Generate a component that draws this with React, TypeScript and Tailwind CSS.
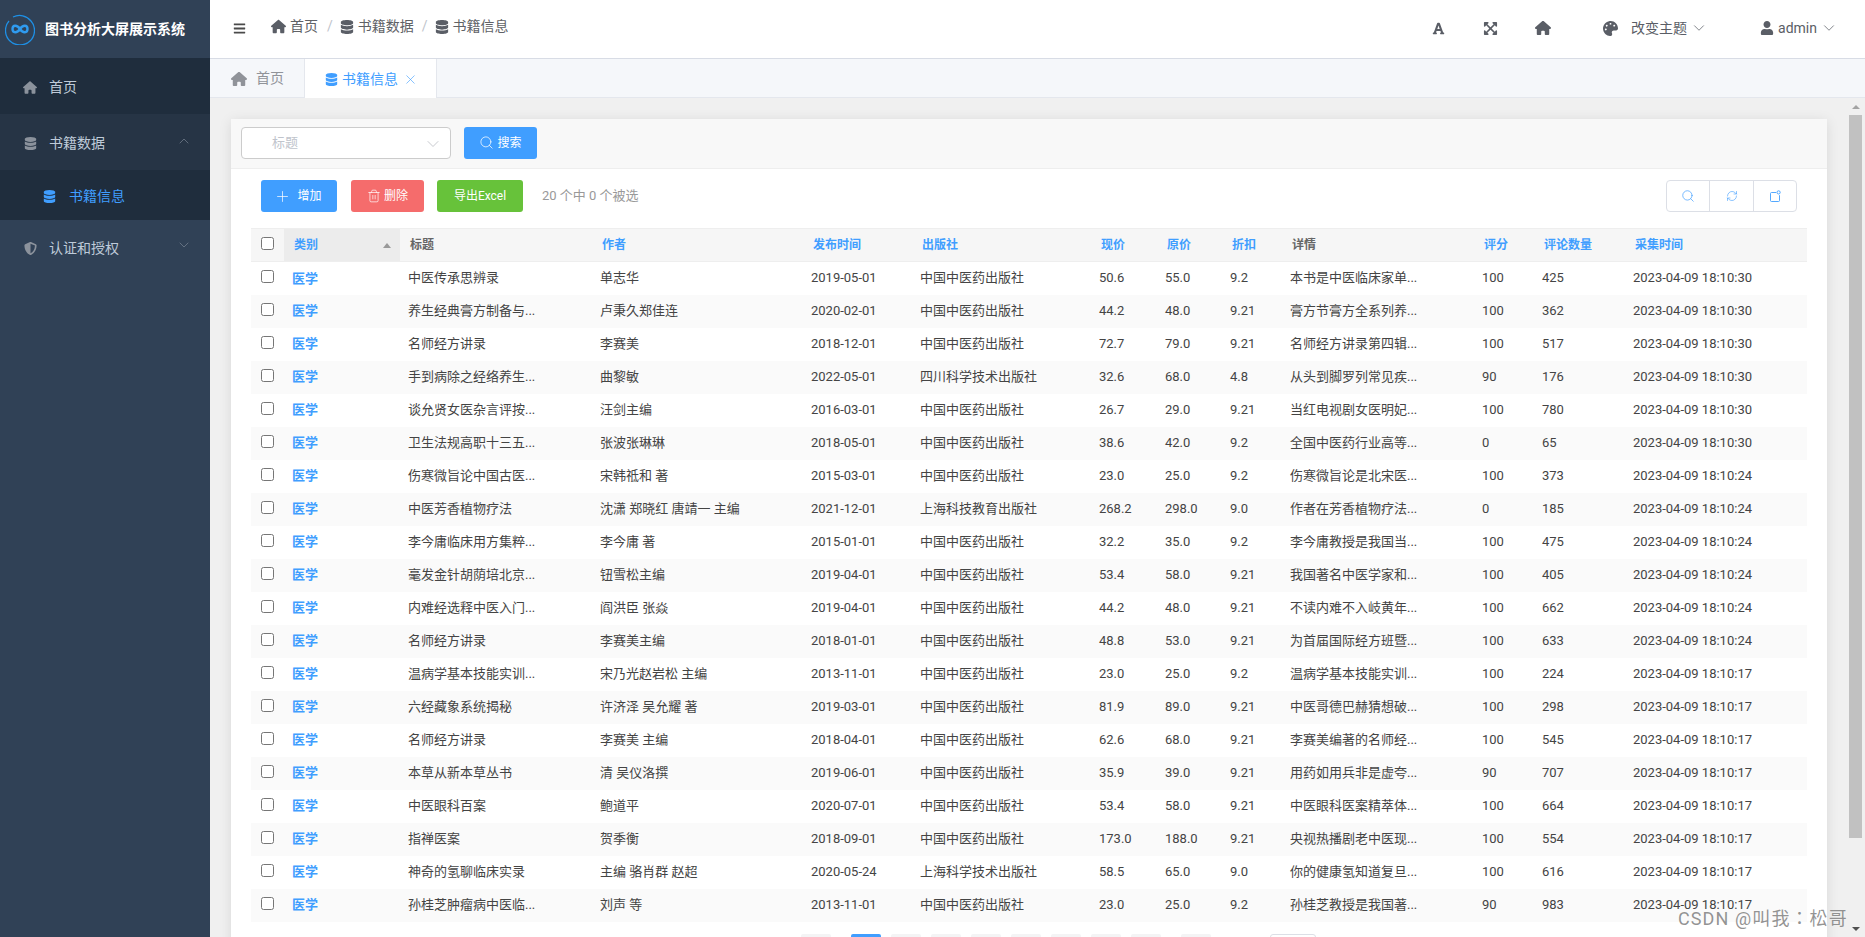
import React from "react";
import { FaDatabase, FaFont, FaExpandArrowsAlt, FaPalette, FaUser, FaShieldAlt, FaBars } from "react-icons/fa";
import { FaHouse as FaHome } from "react-icons/fa6";
import { ChevronDown, ChevronUp, Search, Plus, Trash2, RefreshCw, X } from "lucide-react";

const FONT = { fontFamily: "Roboto, 'Noto Sans CJK SC', sans-serif" };

const COLS = [
  { key: "category", title: "类别", width: 116, blue: true },
  { key: "title", title: "标题", width: 192, blue: false },
  { key: "author", title: "作者", width: 211, blue: true },
  { key: "date", title: "发布时间", width: 109, blue: true },
  { key: "press", title: "出版社", width: 179, blue: true },
  { key: "price", title: "现价", width: 66, blue: true },
  { key: "orig", title: "原价", width: 65, blue: true },
  { key: "disc", title: "折扣", width: 60, blue: true },
  { key: "detail", title: "详情", width: 192, blue: false },
  { key: "score", title: "评分", width: 60, blue: true },
  { key: "comments", title: "评论数量", width: 91, blue: true },
  { key: "time", title: "采集时间", width: 182, blue: true },
];

const ZY = "中国中医药出版社";
const ROWS = [
  ["中医传承思辨录", "单志华", "2019-05-01", ZY, "50.6", "55.0", "9.2", "本书是中医临床家单...", "100", "425", "2023-04-09 18:10:30"],
  ["养生经典膏方制备与...", "卢秉久郑佳连", "2020-02-01", ZY, "44.2", "48.0", "9.21", "膏方节膏方全系列养...", "100", "362", "2023-04-09 18:10:30"],
  ["名师经方讲录", "李赛美", "2018-12-01", ZY, "72.7", "79.0", "9.21", "名师经方讲录第四辑...", "100", "517", "2023-04-09 18:10:30"],
  ["手到病除之经络养生...", "曲黎敏", "2022-05-01", "四川科学技术出版社", "32.6", "68.0", "4.8", "从头到脚罗列常见疾...", "90", "176", "2023-04-09 18:10:30"],
  ["谈允贤女医杂言评按...", "汪剑主编", "2016-03-01", ZY, "26.7", "29.0", "9.21", "当红电视剧女医明妃...", "100", "780", "2023-04-09 18:10:30"],
  ["卫生法规高职十三五...", "张波张琳琳", "2018-05-01", ZY, "38.6", "42.0", "9.2", "全国中医药行业高等...", "0", "65", "2023-04-09 18:10:30"],
  ["伤寒微旨论中国古医...", "宋韩祗和 著", "2015-03-01", ZY, "23.0", "25.0", "9.2", "伤寒微旨论是北宋医...", "100", "373", "2023-04-09 18:10:24"],
  ["中医芳香植物疗法", "沈潇 郑晓红 唐靖一 主编", "2021-12-01", "上海科技教育出版社", "268.2", "298.0", "9.0", "作者在芳香植物疗法...", "0", "185", "2023-04-09 18:10:24"],
  ["李今庸临床用方集粹...", "李今庸 著", "2015-01-01", ZY, "32.2", "35.0", "9.2", "李今庸教授是我国当...", "100", "475", "2023-04-09 18:10:24"],
  ["毫发金针胡荫培北京...", "钮雪松主编", "2019-04-01", ZY, "53.4", "58.0", "9.21", "我国著名中医学家和...", "100", "405", "2023-04-09 18:10:24"],
  ["内难经选释中医入门...", "阎洪臣 张焱", "2019-04-01", ZY, "44.2", "48.0", "9.21", "不读内难不入岐黄年...", "100", "662", "2023-04-09 18:10:24"],
  ["名师经方讲录", "李赛美主编", "2018-01-01", ZY, "48.8", "53.0", "9.21", "为首届国际经方班暨...", "100", "633", "2023-04-09 18:10:24"],
  ["温病学基本技能实训...", "宋乃光赵岩松 主编", "2013-11-01", ZY, "23.0", "25.0", "9.2", "温病学基本技能实训...", "100", "224", "2023-04-09 18:10:17"],
  ["六经藏象系统揭秘", "许济泽 吴允耀 著", "2019-03-01", ZY, "81.9", "89.0", "9.21", "中医哥德巴赫猜想破...", "100", "298", "2023-04-09 18:10:17"],
  ["名师经方讲录", "李赛美 主编", "2018-04-01", ZY, "62.6", "68.0", "9.21", "李赛美编著的名师经...", "100", "545", "2023-04-09 18:10:17"],
  ["本草从新本草丛书", "清 吴仪洛撰", "2019-06-01", ZY, "35.9", "39.0", "9.21", "用药如用兵非是虚夸...", "90", "707", "2023-04-09 18:10:17"],
  ["中医眼科百案", "鲍道平", "2020-07-01", ZY, "53.4", "58.0", "9.21", "中医眼科医案精萃体...", "100", "664", "2023-04-09 18:10:17"],
  ["指禅医案", "贺季衡", "2018-09-01", ZY, "173.0", "188.0", "9.21", "央视热播剧老中医现...", "100", "554", "2023-04-09 18:10:17"],
  ["神奇的氢聊临床实录", "主编 骆肖群 赵超", "2020-05-24", "上海科学技术出版社", "58.5", "65.0", "9.0", "你的健康氢知道复旦...", "100", "616", "2023-04-09 18:10:17"],
  ["孙桂芝肿瘤病中医临...", "刘声 等", "2013-11-01", ZY, "23.0", "25.0", "9.2", "孙桂芝教授是我国著...", "90", "983", "2023-04-09 18:10:17"],
];

// 菜单行
const MenuRow = ({ icon, label, chevron, className }: { icon: React.ReactNode; label: string; chevron?: "up" | "down"; className: string }) => (
  <div className={`flex items-center ${className}`}>
    <span className="flex w-[14px] justify-center text-[#8b929c]">{icon}</span>
    <span className="ml-[12px] text-[14px] text-[#bfcbd9]">{label}</span>
    {chevron === "up" && <ChevronUp className="ml-auto mr-[18px] mb-[4px] text-[#7f8a98]" size={16} strokeWidth={1} />}
    {chevron === "down" && <ChevronDown className="ml-auto mr-[18px] mb-[6px] text-[#7f8a98]" size={16} strokeWidth={1} />}
  </div>
);

const Sidebar = () => (
  <aside className="flex w-[210px] shrink-0 flex-col bg-[#304156]">
    <div className="flex h-[58px] items-center pl-[5px]">
      <svg width="30" height="32" viewBox="0 0 30 32" fill="none">
        <path d="M4 8 A14.5 14.5 0 1 0 26 8 A14.5 14.5 0 0 0 8 4" stroke="#1e90e6" strokeWidth="1.3" />
        <path d="M15 16 C12 11.5 7.5 12 7.5 16 C7.5 20 12 20.5 15 16 C18 11.5 22.5 12 22.5 16 C22.5 20 18 20.5 15 16 Z" stroke="#2f9bf0" strokeWidth="2.4" />
      </svg>
      <span className="ml-[10px] text-[14px] font-bold text-white">图书分析大屏展示系统</span>
    </div>
    <MenuRow className="h-[56px] bg-[#1f2d3d] pl-[23px] pt-[2px]" icon={<FaHome size={15} />} label="首页" />
    <MenuRow className="h-[56px] bg-[#263445] pl-[23px] pt-[2px]" icon={<FaDatabase size={13} />} label="书籍数据" chevron="up" />
    <div className="flex h-[50px] items-center bg-[#1f2d3d] pl-[43px] pt-[2px]">
      <FaDatabase size={13} className="text-[#409eff]" />
      <span className="ml-[13px] text-[14px] text-[#409eff]">书籍信息</span>
    </div>
    <MenuRow className="h-[56px] pl-[23px]" icon={<FaShieldAlt size={13} />} label="认证和授权" chevron="down" />
  </aside>
);

const Crumb = ({ icon, label }: { icon: React.ReactNode; label: string }) => (
  <span className="flex items-center gap-[4px]">
    {icon}
    <span>{label}</span>
  </span>
);

const Header = () => (
  <header className="flex h-[59px] shrink-0 items-center border-b border-[#d8dce5] bg-white pb-[2px] text-[14px] text-[#606266]">
    <FaBars size={13} className="ml-[23px] text-[#4a4a4a]" />
    <div className="mb-[3px] ml-[25px] flex items-center">
      <Crumb icon={<FaHome size={15} className="text-[#5a5e66]" />} label="首页" />
      <span className="ml-[9px] mr-[7px] text-[#c0c4cc]">/</span>
      <Crumb icon={<FaDatabase size={14} className="text-[#5a5e66]" />} label="书籍数据" />
      <span className="ml-[8px] mr-[7px] text-[#c0c4cc]">/</span>
      <Crumb icon={<FaDatabase size={14} className="text-[#5a5e66]" />} label="书籍信息" />
    </div>
    <div className="ml-auto flex items-center text-[#5a5e66]">
      <FaFont size={13} />
      <FaExpandArrowsAlt size={15} className="ml-[38px]" />
      <FaHome size={16} className="ml-[37px]" />
      <FaPalette size={15} className="ml-[52px]" />
      <span className="ml-[13px]">改变主题</span>
      <ChevronDown size={18} strokeWidth={1} className="ml-[3px]" />
      <FaUser size={14} className="ml-[52px]" />
      <span className="ml-[4px]">admin</span>
      <ChevronDown size={18} strokeWidth={1} className="ml-[3px] mr-[27px]" />
    </div>
  </header>
);

const Tabs = () => (
  <div className="flex h-[39px] shrink-0 border-b border-[#e4e7ed] bg-[#f5f7fa] text-[14px]">
    <div className="flex w-[94px] items-center pl-[21px] pt-[1px] text-[#909399]">
      <FaHome size={16} />
      <span className="ml-[9px]">首页</span>
    </div>
    <div className="flex h-[39px] w-[133px] items-center border-x border-[#e4e7ed] bg-white pl-[20px] pt-[1px] text-[#409eff]">
      <FaDatabase size={13} />
      <span className="ml-[4px]">书籍信息</span>
      <X size={15} strokeWidth={1} className="ml-[5px]" />
    </div>
  </div>
);

const ActionButton = ({ className, children }: { className: string; children: React.ReactNode }) => (
  <button className={`flex h-[32px] items-center justify-center rounded-[3px] text-[12px] text-white ${className}`}>{children}</button>
);

const DataTable = () => (
  <table className="w-[1556px] table-fixed border-collapse text-[13px] text-[#444]">
    <colgroup>
      <col className="w-[33px]" />
      {COLS.map((c) => (
        <col key={c.key} style={{ width: c.width }} />
      ))}
    </colgroup>
    <thead>
      <tr className="h-[33px] border-y border-[#eeeeee] bg-[#f6f6f6] text-[12px] font-bold">
        <th className="p-0 pb-[4px] text-left">
          <input type="checkbox" className="ml-[10px] block" />
        </th>
        {COLS.map((c, i) => (
          <th key={c.key} className={`p-0 pl-[10px] text-left font-bold ${i === 0 ? "bg-[#ececec]" : ""} ${c.blue ? "text-[#409eff]" : "text-[#666]"}`}>
            {i === 0 ? (
              <span className="flex items-center justify-between pr-[9px]">
                {c.title}
                <span className="h-0 w-0 border-x-[4px] border-b-[5px] border-x-transparent border-b-[#999]" />
              </span>
            ) : (
              c.title
            )}
          </th>
        ))}
      </tr>
    </thead>
    <tbody>
      {ROWS.map((row, r) => (
        <tr key={r} className={`h-[33px] ${r % 2 ? "bg-[#fafafa]" : "bg-white"}`}>
          <td className="p-0 pb-[4px]">
            <input type="checkbox" className="ml-[10px] block" />
          </td>
          <td className="p-0 pl-[8px] font-bold text-[#409eff]">医学</td>
          {row.map((v, i) => (
            <td key={i} className="truncate p-0 pb-[1px] pl-[8px]">
              {v}
            </td>
          ))}
        </tr>
      ))}
    </tbody>
  </table>
);

const PageBtn = ({ className = "bg-[#f4f4f5]" }: { className?: string }) => <div className={`h-[28px] w-[30px] rounded-[2px] ${className}`} />;

const Pagination = () => (
  <div className="mt-[12px] flex gap-[10px] pl-[550px]">
    <PageBtn className="mr-[10px] bg-[#f4f4f5]" />
    <PageBtn className="bg-[#409eff]" />
    {[0, 1, 2, 3, 4, 5, 6].map((i) => (
      <PageBtn key={i} />
    ))}
    <PageBtn className="ml-[10px] bg-[#f4f4f5]" />
    <div className="ml-[49px] h-[28px] w-[46px] rounded-[3px] border border-[#dcdfe6] bg-white" />
  </div>
);

const Card = () => (
  <div className="ml-[21px] mt-[21px] w-[1596px] bg-white shadow-[0_2px_12px_rgba(0,0,0,0.1)]">
    <div className="flex h-[50px] items-center gap-[13px] border-b border-[#eeeeee] bg-[#f8f8f8] pl-[10px] pb-[2px]">
      <div className="flex h-[32px] w-[210px] items-center rounded-[4px] border border-[#ccc] bg-white pl-[30px] text-[13px] text-[#c0c4cc]">
        标题
        <ChevronDown size={20} strokeWidth={0.9} className="ml-auto mr-[7px] mt-[2px] text-[#b5b8be]" />
      </div>
      <ActionButton className="w-[73px] gap-[3px] bg-[#409eff]">
        <Search size={15} strokeWidth={1.2} />
        搜索
      </ActionButton>
    </div>
    <div className="flex h-[59px] items-center pl-[30px] pb-[5px]">
      <ActionButton className="w-[76px] gap-[6px] bg-[#409eff] pr-[2px]">
        <Plus size={17} strokeWidth={1} />
        增加
      </ActionButton>
      <ActionButton className="ml-[14px] w-[73px] gap-[3px] bg-[#f56c6c]">
        <Trash2 size={14} strokeWidth={1.2} />
        删除
      </ActionButton>
      <ActionButton className="ml-[13px] w-[86px] bg-[#67c23a]">导出Excel</ActionButton>
      <span className="ml-[19px] text-[13px] text-[#999]">20 个中 0 个被选</span>
      <div className="ml-auto mr-[30px] flex h-[32px] divide-x divide-[#dcdfe6] rounded-[4px] border border-[#dcdfe6] text-[#409eff]">
        <span className="flex w-[43px] items-center justify-center">
          <Search size={14} strokeWidth={1.2} />
        </span>
        <span className="flex w-[44px] items-center justify-center">
          <RefreshCw size={12} strokeWidth={1.2} />
        </span>
        <span className="flex w-[42px] items-center justify-center">
          <svg width="12" height="12" viewBox="0 0 12 12" fill="none" stroke="currentColor" strokeWidth="0.9">
            <path d="M7.2 2.5H2.5Q1.5 2.5 1.5 3.5V10.5Q1.5 11.5 2.5 11.5H9.5Q10.5 11.5 10.5 10.5V5.2" />
            <circle cx="9.6" cy="2.4" r="1.6" />
          </svg>
        </span>
      </div>
    </div>
    <div className="px-[20px]">
      <DataTable />
      <Pagination />
    </div>
  </div>
);

const Scrollbar = () => (
  <div className="flex w-[16px] shrink-0 flex-col items-center pr-[3px]">
    <span className="mt-[7px] h-0 w-0 border-x-[4px] border-b-[4px] border-x-transparent border-b-[#a3a3a3]" />
    <div className="mt-[6px] h-[723px] w-[13px] shrink-0 bg-[#c1c1c1]" />
    <span className="mt-[89px] h-0 w-0 border-x-[4px] border-t-[4px] border-x-transparent border-t-[#505050]" />
  </div>
);

export default function App() {
  return (
    <div className="relative flex h-[937px] w-[1865px] overflow-hidden bg-white" style={FONT}>
      <Sidebar />
      <div className="flex min-w-0 flex-1 flex-col">
        <Header />
        <Tabs />
        <div className="flex min-h-0 flex-1 bg-[#f0f0f0]">
          <div className="min-w-0 flex-1 overflow-hidden">
            <Card />
          </div>
          <Scrollbar />
        </div>
      </div>
      {/* 水印 */}
      <span className="absolute left-[1678px] top-[905px] text-[18px] tracking-[1.1px] text-[#808080]/85 [font-family:Roboto,'Noto_Sans_CJK_TC',sans-serif]">CSDN @叫我：松哥</span>
    </div>
  );
}
